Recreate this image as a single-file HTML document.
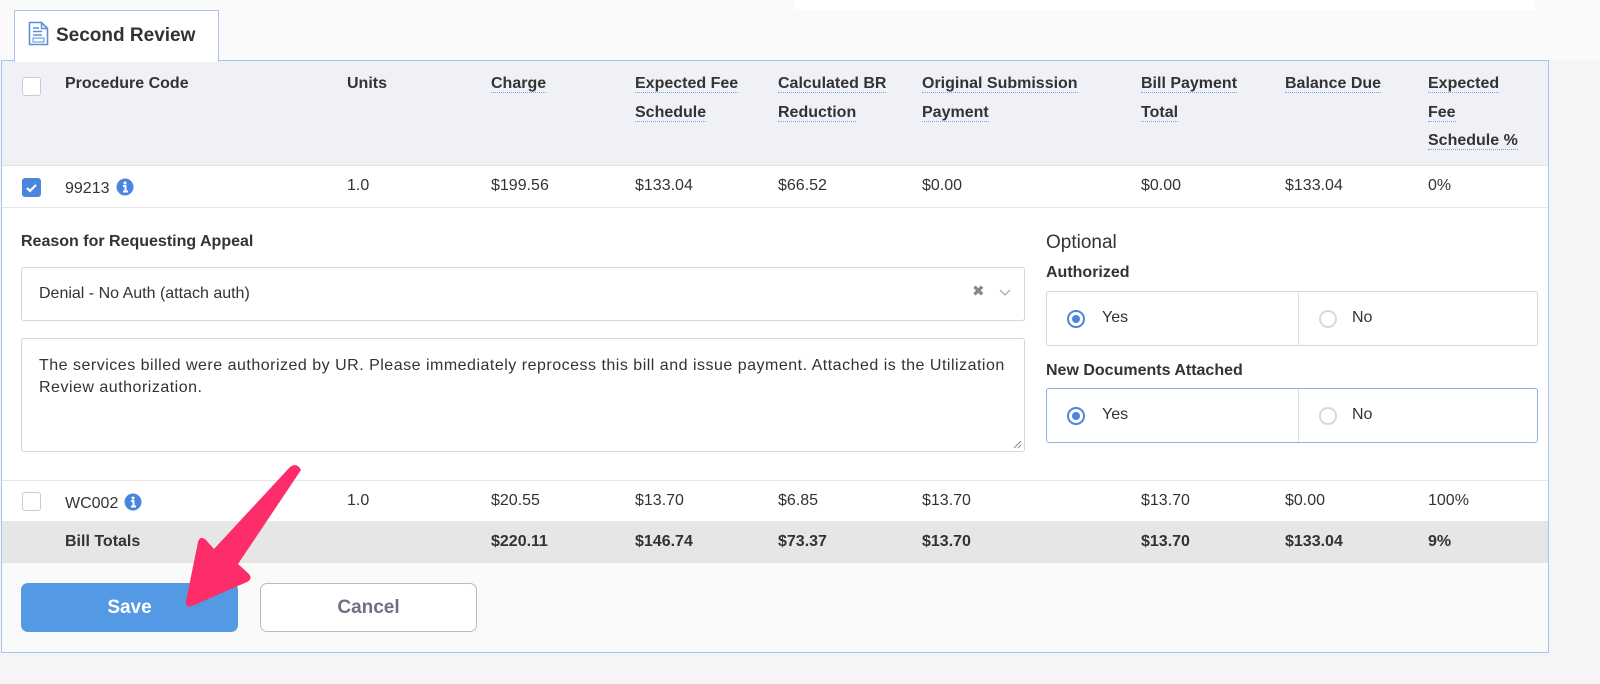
<!DOCTYPE html>
<html><head><style>
*{box-sizing:border-box;margin:0;padding:0}
body{width:1600px;height:684px;background:#f5f5f7;font-family:"Liberation Sans",sans-serif;color:#333;font-size:16px;position:relative;overflow:hidden}
.topwhite{position:absolute;left:795px;top:0;width:740px;height:10px;background:#fff}
.topbg{position:absolute;left:0;top:0;width:1600px;height:60px;background:#fafafb}
.tab{position:absolute;left:14px;top:10px;width:205px;height:52px;background:#fff;border:1px solid #a9c4ec;border-bottom:none;z-index:3}
.tab span{position:absolute;left:41px;top:14px;font-size:19px;font-weight:bold;color:#333}
.box{position:absolute;left:1px;top:60px;width:1548px;height:593px;border:1px solid #a9c4ec;background:#fafafa;border-top:1.5px solid #a9c4ec}
.hdr{position:absolute;left:0;top:0;width:1546px;height:105px;background:#eff1f6;border-bottom:1px solid #e3e3e3}
.a{position:absolute;white-space:nowrap}
.h{font-weight:bold;color:#333;line-height:28.5px;font-size:16px}
.h u{text-decoration:none;border-bottom:1px dotted #7aa2e0}
.row{position:absolute;left:0;width:1546px;background:#fff;border-bottom:1px solid #e6e6e6}
.cb{position:absolute;width:19px;height:19px;border:1px solid #ccc;border-radius:3px;background:#fff}
.cbon{background:#4a86e0;border-color:#4a86e0}
.info{display:inline-block;width:20px;height:20px;vertical-align:-4px;margin-left:4px}
.lbl{font-weight:bold;font-size:16px;color:#333}
.radio{position:absolute;width:18px;height:18px;border-radius:50%;border:2px solid #d8d8d8;background:#fff}
.radio.on{border-color:#4a86e0}
.radio.on::after{content:"";position:absolute;left:3px;top:3px;width:8px;height:8px;border-radius:50%;background:#4a86e0}
</style></head><body>
<div class="topbg"></div>
<div class="topwhite"></div>
<div class="tab">
<svg style="position:absolute;left:13px;top:10px" width="21" height="25" viewBox="0 0 21 25"><path d="M1.5 1.5h12l6 6v16h-18z" fill="#fff" stroke="#5b8fdc" stroke-width="1.6"/><path d="M13.5 1.5v6h6" fill="none" stroke="#5b8fdc" stroke-width="1.5"/><path d="M5 7h6M5 10.5h9M5 14h9" stroke="#5b8fdc" stroke-width="1.4"/><rect x="5" y="17" width="11" height="4" fill="none" stroke="#5b8fdc" stroke-width="1"/></svg>
<span>Second Review</span></div>
<div class="box">
 <div class="hdr">
  <div class="cb" style="left:20px;top:16px"></div>
  <div class="a h" style="left:63px;top:9px">Procedure Code</div>
  <div class="a h" style="left:345px;top:9px">Units</div>
  <div class="a h" style="left:489px;top:9px"><u>Charge</u></div>
  <div class="a h" style="left:633px;top:9px"><u>Expected Fee</u><br><u>Schedule</u></div>
  <div class="a h" style="left:776px;top:9px"><u>Calculated BR</u><br><u>Reduction</u></div>
  <div class="a h" style="left:920px;top:9px"><u>Original Submission</u><br><u>Payment</u></div>
  <div class="a h" style="left:1139px;top:9px"><u>Bill Payment</u><br><u>Total</u></div>
  <div class="a h" style="left:1283px;top:9px"><u>Balance Due</u></div>
  <div class="a h" style="left:1426px;top:9px"><u>Expected</u><br><u>Fee</u><br><u>Schedule %</u></div>
 </div>
 <div class="row" style="top:105px;height:42px">
  <div class="cb cbon" style="left:20px;top:12px"><svg width="17" height="17" viewBox="0 0 17 17"><path d="M4 9l3 3 6-6" fill="none" stroke="#fff" stroke-width="2.2"/></svg></div>
  <div class="a" style="left:63px;top:11px">99213<svg class="info" viewBox="0 0 20 20"><circle cx="11" cy="10" r="8.5" fill="#4a86e0"/><path d="M3 10l4-4v8z" fill="#4a86e0"/><circle cx="11" cy="6" r="1.5" fill="#fff"/><path d="M9 9h2.5v5.5M9 14.5h5" stroke="#fff" stroke-width="2" fill="none"/></svg></div>
  <div class="a" style="left:345px;top:11px">1.0</div>
  <div class="a" style="left:489px;top:11px">$199.56</div>
  <div class="a" style="left:633px;top:11px">$133.04</div>
  <div class="a" style="left:776px;top:11px">$66.52</div>
  <div class="a" style="left:920px;top:11px">$0.00</div>
  <div class="a" style="left:1139px;top:11px">$0.00</div>
  <div class="a" style="left:1283px;top:11px">$133.04</div>
  <div class="a" style="left:1426px;top:11px">0%</div>
 </div>
 <div class="row" style="top:147px;height:273px">
  <div class="a lbl" style="left:19px;top:25px">Reason for Requesting Appeal</div>
  <div class="a" style="left:19px;top:59px;width:1004px;height:54px;border:1px solid #d6d6d6;border-radius:3px;background:#fff">
   <div class="a" style="left:17px;top:17px">Denial - No Auth (attach auth)</div>
   <div class="a" style="left:950px;top:14px;color:#888;font-size:15px">✖</div>
   <svg class="a" style="left:976px;top:20px" width="14" height="10"><path d="M2 2l5 5 5-5" fill="none" stroke="#aaa" stroke-width="1.3"/></svg>
  </div>
  <div class="a" style="left:19px;top:130px;width:1004px;height:114px;border:1px solid #d6d6d6;border-radius:3px;background:#fff;white-space:normal;padding:16px 17px;line-height:22px;letter-spacing:0.5px">The services billed were authorized by UR. Please immediately reprocess this bill and issue payment. Attached is the Utilization Review authorization.
   <svg class="a" style="right:2px;bottom:2px" width="10" height="10"><path d="M9 2L2 9M9 6L6 9" stroke="#888" stroke-width="1"/></svg></div>
  <div class="a" style="left:1044px;top:24px;font-size:19px;color:#333">Optional</div>
  <div class="a lbl" style="left:1044px;top:56px">Authorized</div>
  <div class="a" style="left:1044px;top:83px;width:492px;height:55px;border:1px solid #d6d6d6;border-radius:3px;background:#fff">
   <div class="radio on" style="left:20px;top:18px"></div><div class="a" style="left:55px;top:17px">Yes</div>
   <div class="a" style="left:251px;top:0;width:1px;height:53px;background:#ddd"></div>
   <div class="radio" style="left:272px;top:18px"></div><div class="a" style="left:305px;top:17px">No</div>
  </div>
  <div class="a lbl" style="left:1044px;top:154px">New Documents Attached</div>
  <div class="a" style="left:1044px;top:180px;width:492px;height:55px;border:1px solid #8fb2e8;border-radius:3px;background:#fff">
   <div class="radio on" style="left:20px;top:18px"></div><div class="a" style="left:55px;top:17px">Yes</div>
   <div class="a" style="left:251px;top:0;width:1px;height:53px;background:#ddd"></div>
   <div class="radio" style="left:272px;top:18px"></div><div class="a" style="left:305px;top:17px">No</div>
  </div>
 </div>
 <div class="row" style="top:420px;height:40px;border-bottom:none">
  <div class="cb" style="left:20px;top:11px"></div>
  <div class="a" style="left:63px;top:11px">WC002<svg class="info" viewBox="0 0 20 20"><circle cx="11" cy="10" r="8.5" fill="#4a86e0"/><path d="M3 10l4-4v8z" fill="#4a86e0"/><circle cx="11" cy="6" r="1.5" fill="#fff"/><path d="M9 9h2.5v5.5M9 14.5h5" stroke="#fff" stroke-width="2" fill="none"/></svg></div>
  <div class="a" style="left:345px;top:11px">1.0</div>
  <div class="a" style="left:489px;top:11px">$20.55</div>
  <div class="a" style="left:633px;top:11px">$13.70</div>
  <div class="a" style="left:776px;top:11px">$6.85</div>
  <div class="a" style="left:920px;top:11px">$13.70</div>
  <div class="a" style="left:1139px;top:11px">$13.70</div>
  <div class="a" style="left:1283px;top:11px">$0.00</div>
  <div class="a" style="left:1426px;top:11px">100%</div>
 </div>
 <div class="row" style="top:460px;height:42px;background:#e6e6e6;border:none;font-weight:bold">
  <div class="a" style="left:63px;top:12px">Bill Totals</div>
  <div class="a" style="left:489px;top:12px">$220.11</div>
  <div class="a" style="left:633px;top:12px">$146.74</div>
  <div class="a" style="left:776px;top:12px">$73.37</div>
  <div class="a" style="left:920px;top:12px">$13.70</div>
  <div class="a" style="left:1139px;top:12px">$13.70</div>
  <div class="a" style="left:1283px;top:12px">$133.04</div>
  <div class="a" style="left:1426px;top:12px">9%</div>
 </div>
 <div class="a" style="left:19px;top:522px;width:217px;height:49px;background:#5499e4;border-radius:7px;color:#fff;font-weight:bold;font-size:19px;text-align:center;line-height:49px">Save</div>
 <div class="a" style="left:258px;top:522px;width:217px;height:49px;background:#fff;border:1px solid #bbb;border-radius:7px;color:#6b7280;font-weight:bold;font-size:19px;text-align:center;line-height:47px">Cancel</div>
</div>
<svg style="left:0;top:0;position:absolute" width="1600" height="684"><path d="M290 467 Q297 462 301 470 L238 564 L249 574 Q253 579 247 582 L192 606 Q185 608 186 601 L198 542 Q200 535 206 540 L214 549 Z" fill="#fd2d6a"/></svg>
</body></html>
